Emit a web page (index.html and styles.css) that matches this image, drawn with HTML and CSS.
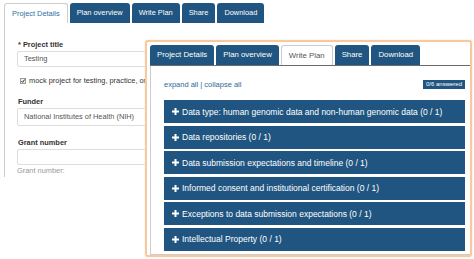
FILE: index.html
```html
<!DOCTYPE html>
<html lang="en">

<head>
  <meta charset="UTF-8" />
  <title>Plan - Write Plan</title>
  <link rel="stylesheet" href="styles.css">
</head>

<body>
  <div class="back">
    <div class="tabs">
      <div class="tab active">Project Details</div>
      <div class="tab">Plan overview</div>
      <div class="tab">Write Plan</div>
      <div class="tab">Share</div>
      <div class="tab">Download</div>
    </div>
    <div class="details">
      <div class="label label-first">* Project title</div>
      <div class="input">Testing</div>
      <div class="check-row">
        <svg class="check" width="6" height="6" viewBox="0 0 6 6">
          <rect x="0.5" y="0.5" width="5" height="5" fill="#f4f4f4" stroke="#9a9a9a" stroke-width="1" />
          <path d="M1.4 3.1 L2.6 4.3 L4.7 1.5" fill="none" stroke="#222" stroke-width="1" />
        </svg>
        <span>mock project for testing, practice, or</span>
      </div>
      <div class="label label-funder">Funder</div>
      <div class="input input-tall">National Institutes of Health (NIH)</div>
      <div class="label label-grant">Grant number</div>
      <div class="input"></div>
      <div class="help">Grant number:</div>
    </div>
  </div>

  <div class="front">
    <div class="tabs">
      <div class="tab">Project Details</div>
      <div class="tab">Plan overview</div>
      <div class="tab active">Write Plan</div>
      <div class="tab">Share</div>
      <div class="tab">Download</div>
    </div>
    <div class="plan">
      <div class="toolbar">
        <span class="links">expand all | collapse all</span>
        <span class="badge">0/6 answered</span>
      </div>
      <div class="sections" id="sections"></div>
    </div>
  </div>

  <script>
    const sections = [
      "Data type: human genomic data and non-human genomic data",
      "Data repositories",
      "Data submission expectations and timeline",
      "Informed consent and institutional certification",
      "Exceptions to data submission expectations",
      "Intellectual Property"
    ];

    const plusIcon = `
      <svg class="plus" width="7" height="7" viewBox="0 0 7 7">
        <path d="M3.5 0 V7 M0 3.5 H7" stroke="#fff" stroke-width="2" />
      </svg>`;

    document.getElementById('sections').innerHTML = sections
      .map(title => `<div class="section">${plusIcon}<span>${title} (0 / 1)</span></div>`)
      .join('');
  </script>
</body>

</html>
```

FILE: styles.css
```css
* {
  box-sizing: border-box;
}

html,
body {
  margin: 0;
  padding: 0;
  background: #fff;
  font-family: 'Liberation Sans', Arial, sans-serif;
  color: #333;
}

/* Pannello sul retro: dettagli del progetto */
.back {
  width: 330px;
  padding: 3px 0 0 4px;
}

.tabs {
  display: flex;
  gap: 2px;
}

.tab {
  height: 20px;
  line-height: 20px;
  padding: 0 7px;
  background-color: #1f5580;
  color: #fff;
  border-radius: 3px 3px 0 0;
  white-space: nowrap;
}

.back .tab {
  font-size: 7.4px;
}

.back .tab.active {
  background-color: #fff;
  color: #2f6ea0;
  border: 1px solid #ccc;
  border-bottom: none;
  line-height: 19px;
}

/* tagliato dove inizia il pannello in primo piano */
.details {
  width: 143px;
  height: 154px;
  overflow: hidden;
  border-left: 1px solid #ccc;
  padding-left: 12px;
  font-size: 7.4px;
}

.label {
  margin-left: 1px;
  font-weight: bold;
  line-height: 10px;
  color: #333;
}

.label-first {
  padding-top: 17px;
}

.label-funder {
  margin-top: 11px;
}

.label-grant {
  margin-top: 12px;
}

.input {
  width: 160px;
  margin-top: 1px;
  height: 16px;
  line-height: 14px;
  padding-left: 6px;
  border: 1px solid #ddd;
  border-radius: 2px;
  color: #555;
  white-space: nowrap;
}

.input-tall {
  height: 18px;
  line-height: 16px;
}

.check-row {
  display: flex;
  align-items: center;
  gap: 3px;
  margin-top: 9px;
  padding-left: 3px;
  line-height: 10px;
  white-space: nowrap;
  color: #333;
}

.check {
  flex-shrink: 0;
}

.help {
  margin-top: 1px;
  line-height: 10px;
  color: #999;
}

/* Pannello in primo piano: scrittura del piano */
.front {
  position: absolute;
  left: 145px;
  top: 40px;
  width: 327px;
  height: 217px;
  display: flex;
  flex-direction: column;
  padding: 3px 0 0 3px;
  background-color: #fff;
  border: 2px solid #f7c9a0;
  border-radius: 3px;
  box-shadow: 0 0 2px #fbdcc0;
}

.front .tabs {
  border-bottom: 1px solid #6b6b6b;
}

.front .tab {
  font-size: 7.8px;
}

.front .tab.active {
  background-color: #fff;
  color: #555;
  border: 1px solid #ccc;
  border-bottom: none;
  line-height: 19px;
}

.plan {
  flex: 1;
  padding: 0 5px 0 13px;
  border-left: 1px solid #ccc;
  border-bottom: 1px solid #ccc;
}

.toolbar {
  display: flex;
  justify-content: space-between;
  align-items: center;
  height: 10px;
  margin-top: 13px;
  margin-bottom: 11px;
}

.links {
  font-size: 7.5px;
  color: #2c6a9a;
}

.badge {
  font-size: 6px;
  line-height: 9px;
  padding: 0 3px;
  background-color: #1f5580;
  color: #fff;
}

.sections {
  display: flex;
  flex-direction: column;
  gap: 2.5px;
}

.section {
  display: flex;
  align-items: center;
  gap: 3px;
  height: 23px;
  padding-left: 8px;
  background-color: #1f5580;
  color: #fff;
  font-size: 8.5px;
  white-space: nowrap;
}

.plus {
  flex-shrink: 0;
}
```
